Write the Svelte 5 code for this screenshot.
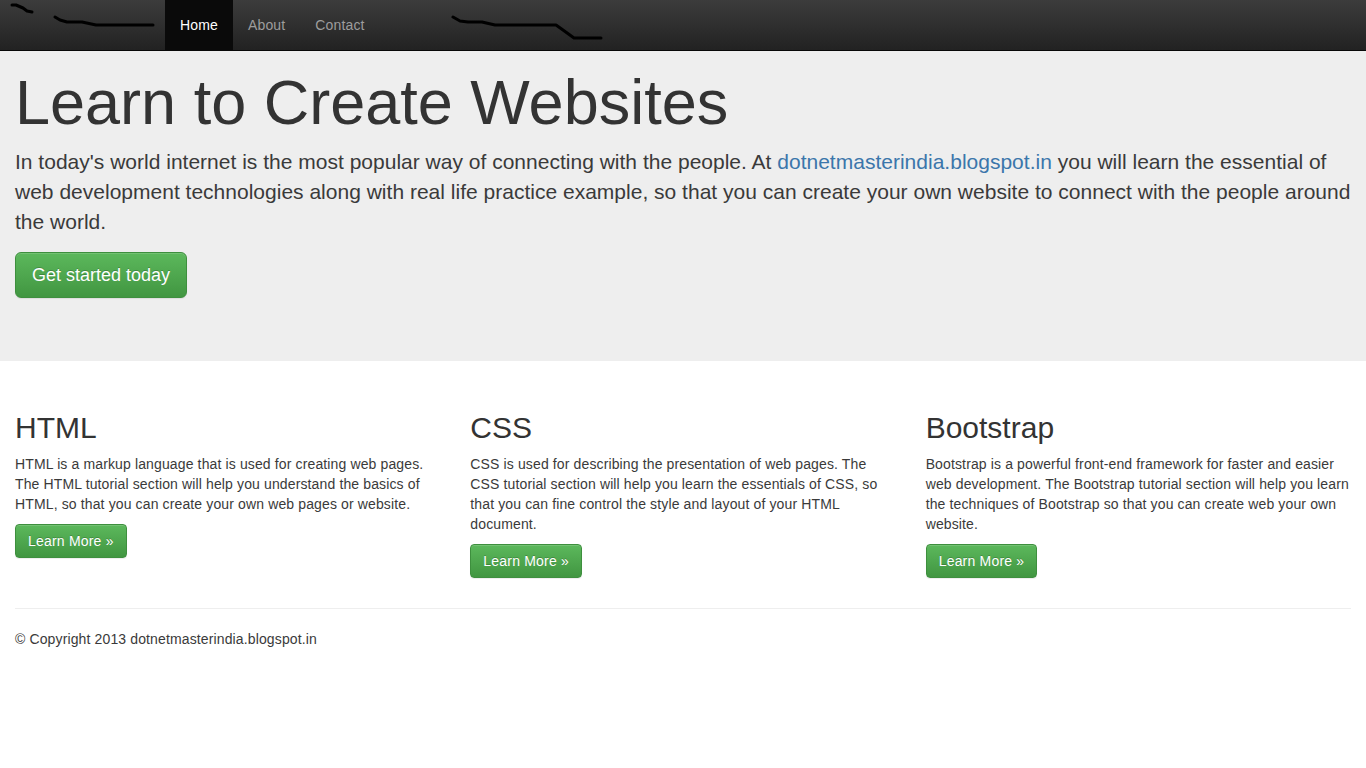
<script lang="ts">
  const links = ['Home', 'About', 'Contact'];

  const columns = [
    {
      title: 'HTML',
      text: 'HTML is a markup language that is used for creating web pages. The HTML tutorial section will help you understand the basics of HTML, so that you can create your own web pages or website.'
    },
    {
      title: 'CSS',
      text: 'CSS is used for describing the presentation of web pages. The CSS tutorial section will help you learn the essentials of CSS, so that you can fine control the style and layout of your HTML document.'
    },
    {
      title: 'Bootstrap',
      text: 'Bootstrap is a powerful front-end framework for faster and easier web development. The Bootstrap tutorial section will help you learn the techniques of Bootstrap so that you can create web your own website.'
    }
  ];
</script>

<nav class="navbar">
  <ul class="nav">
    {#each links as link, i}
      <li><a href="#top" class:active={i === 0}>{link}</a></li>
    {/each}
  </ul>
  <!-- marker scribbles drawn over the bar -->
  <svg class="scribble" width="700" height="50" viewBox="0 0 700 50" aria-hidden="true">
    <path d="M12 5 L16 5 L23 8 L27 11 L32 12" />
    <path d="M55 17 L60 20 L67 22 L82 22 L96 25 L153 25" />
    <path d="M453 17 L460 21 L468 22 L482 22 L495 25 L556 25 L563 30 L574 38 L601 38" />
  </svg>
</nav>

<header class="jumbotron">
  <h1>Learn to Create Websites</h1>
  <p class="lead">
    In today's world internet is the most popular way of connecting with the people. At
    <a href="#top">dotnetmasterindia.blogspot.in</a>
    you will learn the essential of web development technologies along with real life practice
    example, so that you can create your own website to connect with the people around the world.
  </p>
  <p class="cta"><a class="btn btn-lg" href="#top">Get started today</a></p>
</header>

<main class="container">
  <div class="row">
    {#each columns as col}
      <section class="col">
        <h2>{col.title}</h2>
        <p>{col.text}</p>
        <p><a class="btn" href="#top">Learn More »</a></p>
      </section>
    {/each}
  </div>
  <hr />
  <footer>
    <p>© Copyright 2013 dotnetmasterindia.blogspot.in</p>
  </footer>
</main>

<style>
  :global(body) {
    font-family: "Liberation Sans", Arial, sans-serif;
    font-size: 14px;
    line-height: 20px;
    letter-spacing: 0.13px;
    color: #3a3a3a;
    background: #fff;
  }

  .navbar {
    position: relative;
    height: 50px;
    box-sizing: content-box;
    padding-left: 165px;
    background: linear-gradient(to bottom, #3c3c3c 0%, #222 100%);
    border-bottom: 1px solid #080808;
  }

  .nav {
    display: flex;
    margin: 0;
    padding: 0;
    list-style: none;
  }

  .nav a {
    display: block;
    padding: 15px;
    color: #9d9d9d;
    letter-spacing: 0.15px;
    text-decoration: none;
  }

  .nav a.active {
    color: #fff;
    background: #0a0a0a;
  }

  .scribble {
    position: absolute;
    top: 0;
    left: 0;
    pointer-events: none;
  }

  .scribble path {
    fill: none;
    stroke: #000;
    stroke-width: 3;
    stroke-linecap: round;
    stroke-linejoin: round;
  }

  .jumbotron {
    height: 310px;
    box-sizing: border-box;
    padding: 20px 15px 0;
    background: #eee;
  }

  h1 {
    margin: 0 0 13px;
    font-size: 63px;
    font-weight: 500;
    line-height: 63px;
    letter-spacing: 0;
    color: #333;
  }

  .lead {
    margin: 0 0 15px;
    font-size: 21px;
    line-height: 30px;
    letter-spacing: 0.008px;
  }

  .lead a {
    color: #3b76ab;
    text-decoration: none;
  }

  .cta {
    margin: 0;
  }

  .btn {
    display: inline-block;
    box-sizing: border-box;
    height: 34px;
    padding: 6px 12px;
    color: #fff;
    letter-spacing: 0.2px;
    text-decoration: none;
    background: linear-gradient(to bottom, #5cb85c 0%, #419641 100%);
    border: 1px solid #3e8f3e;
    border-radius: 4px;
    text-shadow: 0 -1px 0 rgba(0, 0, 0, 0.2);
    box-shadow: inset 0 1px 0 rgba(255, 255, 255, 0.15), 0 1px 1px rgba(0, 0, 0, 0.075);
  }

  .btn-lg {
    height: 46px;
    padding: 10px 16px;
    font-size: 18px;
    line-height: 24px;
    letter-spacing: 0;
    border-radius: 6px;
  }

  .container {
    padding: 0 15px;
  }

  .row {
    display: grid;
    grid-template-columns: repeat(3, 1fr);
    margin: 0 -15px;
    padding-top: 30px;
  }

  .col {
    padding: 0 15px;
  }

  h2 {
    margin: 20px 0 10px;
    font-size: 30px;
    font-weight: 500;
    line-height: 33px;
    letter-spacing: 0;
    color: #333;
  }

  .col p {
    margin: 0 0 10px;
  }

  hr {
    margin: 20px 0;
    border: 0;
    border-top: 1px solid #eee;
  }

  footer p {
    margin: 0;
  }
</style>
